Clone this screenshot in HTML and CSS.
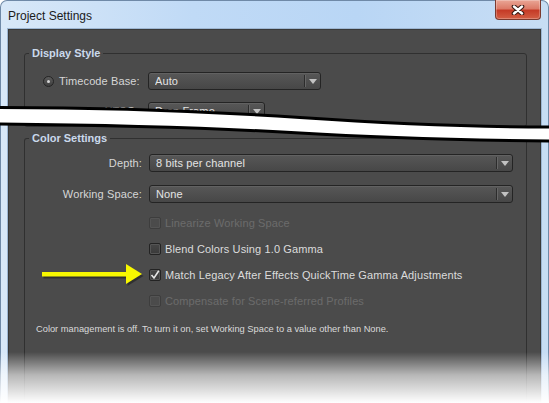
FILE: index.html
```html
<!DOCTYPE html>
<html lang="en">

<head>
    <meta charset="UTF-8">
    <title>Project Settings</title>
    <link rel="stylesheet" href="styles.css">
</head>

<body>
    <div class="window">
        <div class="titlebar">
            <span class="title">Project Settings</span>
            <div class="close">
                <svg width="14" height="10" viewBox="0 0 14 10">
                    <path d="M3 1.5 L11 8.5 M11 1.5 L3 8.5" stroke="#3a1a14" stroke-width="4.6" stroke-linecap="round" />
                    <path d="M3 1.5 L11 8.5 M11 1.5 L3 8.5" stroke="#fff" stroke-width="2.4" stroke-linecap="round" />
                </svg>
            </div>
        </div>

        <div class="panel">
            <fieldset class="group">
                <legend>Display Style</legend>
                <div class="tc-row">
                    <span class="radio on"></span>
                    <label class="tc-label">Timecode Base:</label>
                    <div class="select tc-auto">
                        <span class="value">Auto</span>
                        <span class="drop"></span>
                    </div>
                </div>
                <div class="tc-row second">
                    <span class="radio-space"></span>
                    <label class="tc-label right">NTSC:</label>
                    <div class="select tc-ntsc">
                        <span class="value">Drop Frame</span>
                        <span class="drop"></span>
                    </div>
                </div>
            </fieldset>

            <fieldset class="group color">
                <legend>Color Settings</legend>
                <div class="fields">
                    <label>Depth:</label>
                    <div class="select">
                        <span class="value">8 bits per channel</span>
                        <span class="drop"></span>
                    </div>
                    <label>Working Space:</label>
                    <div class="select">
                        <span class="value">None</span>
                        <span class="drop"></span>
                    </div>
                </div>

                <div class="checks">
                    <div class="check disabled"><span class="box"></span>Linearize Working Space</div>
                    <div class="check"><span class="box"></span>Blend Colors Using 1.0 Gamma</div>
                    <div class="check">
                        <span class="box">
                            <svg width="10" height="10" viewBox="0 0 10 10">
                                <path d="M1.5 5 L4 8 L8.8 0.8" fill="none" stroke="#e6e6e6" stroke-width="1.6" />
                            </svg>
                        </span>Match Legacy After Effects QuickTime Gamma Adjustments
                    </div>
                    <div class="check disabled"><span class="box"></span>Compensate for Scene-referred Profiles</div>
                </div>

                <p class="note">Color management is off. To turn it on, set Working Space to a value other than None.</p>
            </fieldset>
        </div>
    </div>

    <!-- torn-paper cut over the dialog -->
    <svg class="tear" width="549" height="50" viewBox="0 0 549 50">
        <path d="M-2 7.5 C100 7.5 200 11 300 17.5 C380 23 460 27 551 27 L551 41 C460 40 380 38 300 33 C200 27 100 25 -2 24 Z" fill="#fff" />
        <path d="M-2 7.5 C100 7.5 200 11 300 17.5 C380 23 460 27 551 27" fill="none" stroke="#000" stroke-width="3" />
        <path d="M-2 24 C100 25 200 27 300 33 C380 38 460 40 551 41" fill="none" stroke="#000" stroke-width="3" />
    </svg>

    <!-- yellow callout arrow -->
    <svg class="pointer" width="110" height="32" viewBox="0 0 110 32">
        <g fill="rgba(0,0,0,0.35)" transform="translate(1.5 2)">
            <rect x="6" y="14" width="86" height="4.5" />
            <polygon points="90,6 106,16 90,26" />
        </g>
        <g fill="#f8f800">
            <rect x="6" y="14" width="86" height="4.5" />
            <polygon points="90,6 106,16 90,26" />
        </g>
    </svg>

    <div class="fade"></div>
</body>

</html>
```

FILE: styles.css
```css
* {
    margin: 0;
    padding: 0;
    box-sizing: border-box;
}

html,
body {
    width: 549px;
    height: 403px;
    overflow: hidden;
}

body {
    position: relative;
    font-family: "Liberation Sans", Arial, sans-serif;
    font-size: 11px;
    letter-spacing: 0.12px;
    background-color: #fff;
}

.window {
    height: 403px;
    display: flex;
    flex-direction: column;
    padding: 0 7px;
    border: 1px solid #6f89a7;
    border-bottom: none;
    border-radius: 7px 7px 0 0;
    background: linear-gradient(to right, #d8e8f8 0%, #c0daf6 35%, #b9d6f5 65%, #c7ddf4 100%);
}

.titlebar {
    height: 28px;
    flex-shrink: 0;
    display: flex;
    align-items: flex-start;
}

.title {
    padding-top: 8px;
    font-size: 12px;
    line-height: 14px;
    letter-spacing: 0;
    color: #1b1b1b;
}

.close {
    margin-left: auto;
    margin-top: -1px;
    width: 46px;
    height: 20px;
    display: flex;
    align-items: center;
    justify-content: center;
    border: 1px solid #7b3a2f;
    border-top: none;
    border-radius: 0 0 4px 4px;
    background: linear-gradient(#eaa696 0%, #dc7b68 45%, #c53b27 55%, #d35e44 100%);
    box-shadow: inset 0 0 0 1px rgba(255, 255, 255, 0.25);
}

.panel {
    flex: 1;
    display: flex;
    flex-direction: column;
    padding: 16px 13px 0 15px;
    background-color: #4b4b4b;
    border: 1px solid #3a3a3a;
    border-bottom: none;
    box-shadow: 0 0 0 1px #9db6d2;
}

.group {
    border: 1px solid #303030;
    border-radius: 3px;
    padding: 12px 13px 6px 11px;
}

legend {
    margin-left: -7px;
    padding: 0 3px;
    font-weight: bold;
    line-height: 14px;
    letter-spacing: 0;
    color: #cad9eb;
}

/* Display Style rows */
.tc-row {
    display: flex;
    align-items: center;
    height: 18px;
}

.tc-row.second {
    margin-top: 12px;
}

.radio,
.radio-space {
    width: 11px;
    height: 11px;
    margin-left: 7px;
    flex-shrink: 0;
}

.radio {
    display: flex;
    align-items: center;
    justify-content: center;
    border: 1px solid #242424;
    border-radius: 50%;
    background: linear-gradient(#5c5c5c, #3e3e3e);
}

.radio.on::after {
    content: "";
    width: 3px;
    height: 3px;
    border-radius: 50%;
    background-color: #d6d6d6;
}

.tc-label {
    width: 89px;
    margin-left: 5px;
    color: #d6d6d6;
}

.tc-label.right {
    text-align: right;
    padding-right: 10px;
}

.tc-auto {
    width: 173px;
}

.tc-ntsc {
    width: 117px;
}

/* dropdowns */
.select {
    height: 18px;
    display: flex;
    align-items: center;
    padding-left: 6px;
    border: 1px solid #242424;
    border-radius: 3px;
    background: linear-gradient(#575757, #474747);
    box-shadow: inset 0 1px 0 rgba(255, 255, 255, 0.07);
    color: #e4e4e4;
}

.select .value {
    flex: 1;
    white-space: nowrap;
    overflow: hidden;
}

.select .drop {
    width: 16px;
    height: 12px;
    display: flex;
    align-items: center;
    justify-content: center;
    border-left: 1px solid #2c2c2c;
    box-shadow: inset 1px 0 0 #666;
}

.select .drop::after {
    content: "";
    border-left: 4px solid transparent;
    border-right: 4px solid transparent;
    border-top: 5px solid #c2c2c2;
}

/* Color Settings */
.group.color {
    flex: 1;
    margin-top: 4px;
    padding-top: 9px;
    border-bottom: none;
    border-radius: 3px 3px 0 0;
}

.fields {
    display: grid;
    grid-template-columns: 106px 1fr;
    column-gap: 7px;
    row-gap: 13px;
    align-items: center;
}

.fields label {
    text-align: right;
    color: #d6d6d6;
}

.checks {
    display: flex;
    flex-direction: column;
    gap: 8px;
    margin-top: 11px;
    padding-left: 113px;
}

.check {
    height: 18px;
    display: flex;
    align-items: center;
    color: #dcdcdc;
    white-space: nowrap;
}

.check .box {
    width: 12px;
    height: 12px;
    margin-right: 4px;
    display: flex;
    align-items: center;
    justify-content: center;
    border: 1px solid #232323;
    border-radius: 2px;
    background: linear-gradient(#464646, #3a3a3a);
    box-shadow: inset 0 0 0 1px #555;
}

.check.disabled {
    color: #6b6b6b;
}

.check.disabled .box {
    border-color: #3d3d3d;
    background: #4b4b4b;
    box-shadow: inset 0 0 0 1px #545454;
}

.note {
    margin-top: 12px;
    font-size: 9.3px;
    line-height: 14px;
    letter-spacing: 0;
    color: #dadada;
    white-space: nowrap;
}

/* overlays */
.tear {
    position: absolute;
    top: 100px;
    left: 0;
}

.pointer {
    position: absolute;
    left: 36px;
    top: 258px;
}

.fade {
    position: absolute;
    left: 0;
    right: 0;
    top: 352px;
    height: 51px;
    background: linear-gradient(rgba(255, 255, 255, 0) 0%, rgba(255, 255, 255, 0.6) 45%, #fff 100%);
}
```
